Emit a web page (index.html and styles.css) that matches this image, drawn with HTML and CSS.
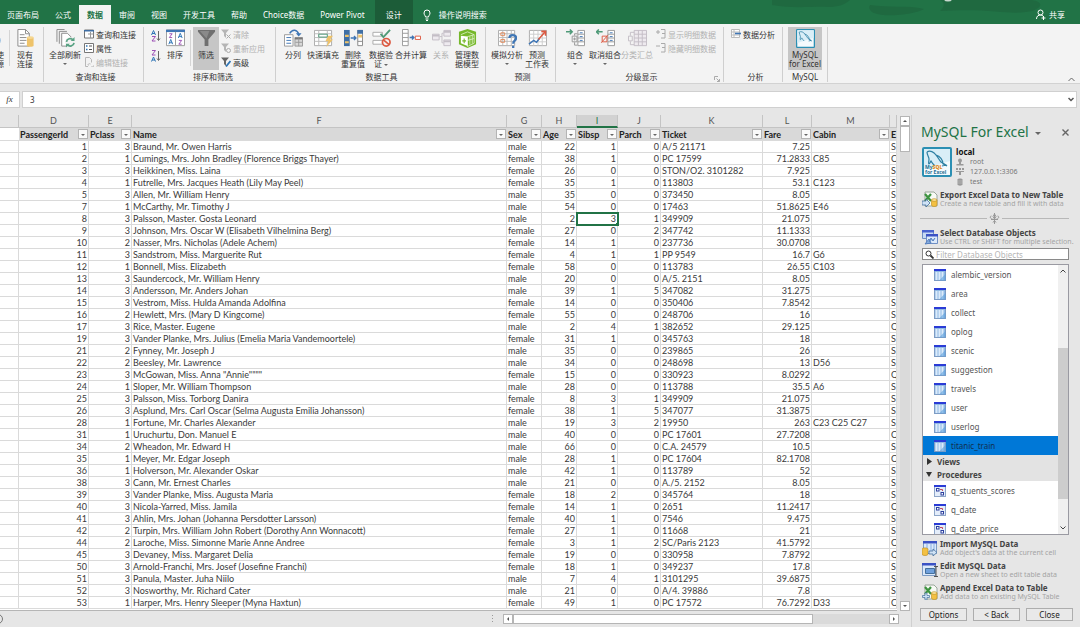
FILE: index.html
```html
<!DOCTYPE html>
<html lang="zh-CN">
<head>
  <meta charset="utf-8">
  <meta name="viewport" content="width=device-width, initial-scale=1.0">
  <title>MySQL For Excel</title>
  <link rel="stylesheet" href="styles.css">
</head>
<body>
  <!-- shared icons -->
  <svg class="symbols" aria-hidden="true">
    <symbol id="i-table" viewBox="0 0 12 12">
      <rect x="0.5" y="1" width="11" height="10.5" fill="#8fb9e4" stroke="#7d9cc4"/>
      <rect x="0" y="0" width="12" height="2" fill="#2a3bd6"/>
      <path d="M2.500 3v8M5.500 3v8M8.500 3v8" stroke="#dcebfa" stroke-width="2"/>
      <path d="M5 11.500 L11.500 5 V11.500 Z" fill="#5da0dc" opacity=".6"/>
    </symbol>
    <symbol id="i-proc" viewBox="0 0 12 12">
      <rect x="0.5" y="0.5" width="11" height="11" fill="#e4edfa" stroke="#8ea6c8"/>
      <rect x="0" y="0" width="12" height="2" fill="#2a3bd6"/>
      <rect x="2.500" y="3.500" width="2.500" height="2.500" fill="#fff" stroke="#2b3f9e"/>
      <rect x="7" y="7.500" width="2.500" height="2.500" fill="#fff" stroke="#2b3f9e"/>
      <path d="M6 4.500h2.500V6" fill="none" stroke="#c34b5e"/>
    </symbol>
    <symbol id="i-logo" viewBox="0 0 30 30">
      <rect x="1" y="1" width="28" height="28" rx="1" fill="#f4fafd" stroke="#2b8fb3" stroke-width="2"/>
      <path d="M2 2h26v12L2 22z" fill="#d9eef7"/>
      <path d="M5 5c3-2 7 0 9 3 2 2 3 5 5 7l5 3-4 1M5 5c0 3 2 5 2 7 0 3-1 4 0 5 1 0 1-2 2-3 1 2 3 4 4 5M14 8c4 1 7 5 7 9l4 2" fill="none" stroke="#2d7fa3" stroke-width="1.200"/>
    </symbol>
    <symbol id="i-excel" viewBox="0 0 16 16">
      <path d="M3 1h9l3 3v11H3z" fill="#f7faf5" stroke="#9aa69a"/>
      <path d="M3 3l6 7M9 3l-6 7" stroke="#3d9440" stroke-width="2.200"/>
      <path d="M9.500 9v5c0 2 5.500 2 5.500 0V9z" fill="#f3c043" stroke="#b98a1c" stroke-width=".6"/>
      <ellipse cx="12.200" cy="9" rx="2.800" ry="1.300" fill="#ffe59a" stroke="#b98a1c" stroke-width=".6"/>
    </symbol>
  </svg>

  <header class="tabs">
    <svg class="tabs-art" viewBox="0 0 320 24" aria-hidden="true">
      <path d="M12 0h78c-6 5-12 7-22 7-14-1-34 2-56-2zM110 5c18 3 38 0 54 4-8 5-38 9-50 4-4-2-6-5-4-8zM180 0h92c12 2 10 8 0 11-24 5-36-3-92 0 4-4 6-7 0-11z" fill="#1f6940"/>
      <ellipse cx="188" cy="-1" rx="4" ry="2.500" fill="#c9d8cf"/>
    </svg>
    <button class="tab">页面布局</button>
    <button class="tab">公式</button>
    <button class="tab active">数据</button>
    <button class="tab">审阅</button>
    <button class="tab">视图</button>
    <button class="tab">开发工具</button>
    <button class="tab">帮助</button>
    <button class="tab">Choice数据</button>
    <button class="tab">Power Pivot</button>
    <button class="tab design">设计</button>
    <button class="tab tell-me">
      <svg width="8" height="12" viewBox="0 0 8 12" fill="none" stroke="#fff"><path d="M2.500 8C2.500 6.500 1 6 1 4a3 3 0 0 1 6 0c0 2-1.500 2.500-1.500 4zM2.500 10h3M3 11.500h2"/></svg>
      操作说明搜索
    </button>
    <button class="tab share">
      <svg width="10" height="11" viewBox="0 0 10 11" fill="none" stroke="#fff"><circle cx="4.500" cy="3.500" r="2.500"/><path d="M.5 10c0-3 2-4 4-4 1 0 2 .5 2.500 1M7.500 7v4M5.500 9h4"/></svg>
      共享
    </button>
  </header>

  <div class="ribbon">
    <section class="group recent">
      <div class="tools">
        <button class="big">
          <svg class="ico" viewBox="0 0 20 20" fill="none" stroke="#5b9bd5"><circle cx="12" cy="12" r="6"/><path d="M12 8v4l3 2"/></svg>
          <span>最近使<br>用的源</span>
        </button>
        <i class="bar"></i>
        <button class="big narrow">
          <svg class="ico" viewBox="0 0 20 20"><path d="M2 .5h8l4 4V18H2z" fill="#fff" stroke="#8a8a8a"/><path d="M10 .5V5h4M4 6h5M4 9h7M4 12h7M4 15h5" fill="none" stroke="#8a8a8a"/><path d="M11.500 9v8.500c0 1.500 7 1.500 7 0V9z" fill="#eec36a"/><ellipse cx="15" cy="9" rx="3.500" ry="1.500" fill="#f6d791"/></svg>
          <span>现有<br>连接</span>
        </button>
      </div>
    </section>

    <section class="group connections">
      <div class="tools">
        <button class="big wide">
          <svg class="ico" viewBox="0 0 20 20"><path d="M1 .5h8M1 .5v13M3.500 2.500h8M3.500 2.500v13" fill="none" stroke="#8a8a8a"/><path d="M6 4.500h6l4 4V18H6z" fill="#fff" stroke="#8a8a8a"/><circle cx="15" cy="14" r="5.500" fill="#f3f3f3"/><path d="M11 13.500a4 4 0 0 1 7-2M19 14.500a4 4 0 0 1-7 2" fill="none" stroke="#58a283" stroke-width="1.800"/><path d="M19.500 8.500v4h-4zM10.500 19.500v-4h4z" fill="#58a283"/></svg>
          <span>全部刷新</span><i class="caret"></i>
        </button>
        <div class="stack">
          <button class="small"><svg class="sico" viewBox="0 0 10 10"><path d="M.5 1h9v8h-9z" fill="#fff" stroke="#777"/><path d="M0 1h10v1.500H0z" fill="#3f6fa5"/><path d="M4 5h5.500M6.500 3v6" stroke="#999"/></svg>查询和连接</button>
          <button class="small"><svg class="sico" viewBox="0 0 10 10"><path d="M.5.5h9v9h-9z" fill="#fff" stroke="#777"/><path d="M2 3h1.500M2 6.500h1.500" stroke="#2e75b6" stroke-width="1.500"/><path d="M5 3h3M5 6.500h3" stroke="#555"/></svg>属性</button>
          <button class="small" disabled><svg class="sico" viewBox="0 0 10 10" fill="none" stroke="#b8b8b8"><path d="M1.500 9.500v-9h4l2 2v3M1.500 9.500H4"/><path d="M4.500 8.500a1.500 1 0 0 1 2-1.500M9.500 8a1.500 1 0 0 1-2 1.500"/></svg>编辑链接</button>
        </div>
      </div>
      <h2>查询和连接</h2>
    </section>

    <section class="group sort">
      <div class="tools">
        <div class="stack az">
          <button class="small" aria-label="升序"><svg width="10" height="12" viewBox="0 0 10 12" fill="none"><path d="M.5 5 2.500.5 4.500 5M1 3.500h3" stroke="#2e75b6"/><path d="M1 6.500h3.500L1 11h3.500" stroke="#9b4fb5"/><path d="M7.500 1v9M6 8.500 7.500 10.500 9 8.500" stroke="#666"/></svg></button>
          <button class="small" aria-label="降序"><svg width="10" height="12" viewBox="0 0 10 12" fill="none"><path d="M1 .5h3.500L1 5h3.500" stroke="#9b4fb5"/><path d="M.5 11.500 2.500 7l2 4.500M1 10h3" stroke="#2e75b6"/><path d="M7.500 1v9M6 8.500 7.500 10.500 9 8.500" stroke="#666"/></svg></button>
        </div>
        <button class="big narrow">
          <svg class="ico" viewBox="0 0 20 20" fill="none"><path d="M.5 1h19v16.500H.5z" fill="#fff" stroke="#999"/><path d="M0 2h20" stroke="#3f76b5" stroke-width="2.500"/><path d="M10 3v14" stroke="#999"/><path d="M3.500 5h3L3.500 9h3M13.500 12h3l-3 4h3" stroke="#9b4fb5"/><path d="M3 16l2-5 2 5M3.500 14.500h3M13 9.500l2-5 2 5M13.500 8h3" stroke="#2e75b6"/></svg>
          <span>排序</span>
        </button>
        <i class="bar"></i>
        <button class="big narrow pressed">
          <svg class="ico" viewBox="0 0 20 20"><path d="M1 1h18v2l-7 8v7H8v-7L1 3z" fill="#6f6f6f"/><path d="M3 2h10l-3 8z" fill="#8a8a8a"/></svg>
          <span>筛选</span>
        </button>
        <div class="stack">
          <button class="small" disabled><svg class="sico" viewBox="0 0 10 10"><path d="M0 .5h8L5 4v5L3 7V4z" fill="#b5b5b5"/><path d="M5.500 5.500l4 4M9.500 5.500l-4 4" stroke="#aaa"/></svg>清除</button>
          <button class="small" disabled><svg class="sico" viewBox="0 0 10 10"><path d="M0 .5h8L5 4v5L3 7V4z" fill="#b5b5b5"/><circle cx="7.500" cy="7.500" r="2" fill="#f3f3f3" stroke="#aaa"/></svg>重新应用</button>
          <button class="small"><svg class="sico" viewBox="0 0 10 10"><path d="M0 .5h8L5 4v5L3 7V4z" fill="#666"/><path d="M5 9.500 9.500 4" stroke="#2e75b6" stroke-width="1.800"/></svg>高级</button>
        </div>
      </div>
      <h2>排序和筛选</h2>
    </section>

    <section class="group data-tools">
      <div class="tools">
        <button class="big">
          <svg class="ico" viewBox="0 0 20 20" fill="none"><path d="M.5 6h9v12h-9z" fill="#fff" stroke="#999"/><path d="M2.500 9h5M2.500 12h5M2.500 15h5" stroke="#3f76b5"/><path d="M11.500 9h8v9h-8z" fill="#d8d8d8" stroke="#999"/><path d="M11.500 10h8" stroke="#777" stroke-width="2"/><path d="M15.500 10v8M12 14h7" stroke="#999"/><path d="M6 4.500c3-5 8-4 9.500 1" stroke="#3f76b5" stroke-width="1.600"/><path d="M12.500 4.500h6l-3 3.500z" fill="#3f76b5"/></svg>
          <span>分列</span>
        </button>
        <button class="big">
          <svg class="ico" viewBox="0 0 20 20" fill="none"><path d="M.5 1.500h18v16H.5z" fill="#fff" stroke="#aaa"/><path d="M.5 5h18M.5 9h18M.5 13h18M5 1.500v16M14 1.500v16" stroke="#bbb"/><path d="M5 5.500h9v3H5z" fill="#fff" stroke="#4f9a78"/><path d="M15 7h5l-3 4h3l-7 8 2-6h-3z" fill="#eec36a"/></svg>
          <span>快速填充</span>
        </button>
        <button class="big">
          <svg class="ico" viewBox="0 0 20 20" fill="none"><path d="M0 1h6v17H0z" fill="#3f6fa5"/><path d="M1 6h4v2.500H1zM1 13h4v2H1z" fill="#eec36a"/><path d="M14.500 1.500h5v16h-5z" fill="#fff" stroke="#888"/><path d="M14 1h6v4h-6z" fill="#3f6fa5"/><path d="M15 6h4v3h-4z" fill="#eec36a"/><path d="M14.500 13h5" stroke="#888"/><path d="M7 9.500h5M10.500 7.500l2 2-2 2" stroke="#3f76b5" stroke-width="1.500"/></svg>
          <span>删除<br>重复值</span>
        </button>
        <button class="big narrow">
          <svg class="ico" viewBox="0 0 20 20" fill="none"><path d="M1 3.500h10v4H1zM1 12h10v4H1z" fill="#fff" stroke="#aaa"/><path d="M9 5l3 3.500L19 1" stroke="#4f9a78" stroke-width="2"/><circle cx="15" cy="14" r="4" fill="#f3f3f3" stroke="#dc5a42" stroke-width="1.800"/><path d="M12 11.500l6 5" stroke="#dc5a42" stroke-width="1.800"/></svg>
          <span>数据验<br>证 <i class="caret"></i></span>
        </button>
        <button class="big wide">
          <svg class="ico" viewBox="0 0 20 20" fill="none"><path d="M.5.5h6v17h-6zM.5 4.500h6M.5 9h6M.5 13h6" fill="#fff" stroke="#999"/><path d="M8 9h4M10.500 7l2 2-2 2" stroke="#3f76b5" stroke-width="1.500"/><path d="M14 7.500h5.500v3.500H14z" fill="#fff" stroke="#dc5a42"/></svg>
          <span>合并计算</span>
        </button>
        <button class="big narrow" disabled>
          <svg class="ico" viewBox="0 0 20 20" fill="none" stroke="#c4bec6"><path d="M.5 5.500h7v6h-7zM12.500 1.500h7v6h-7zM12.500 11.500h7v6h-7z" fill="#eeeaef"/><path d="M.5 7h7M12.500 3h7M12.500 13h7" stroke-width="2"/><path d="M8 8h2.500M12 4.500h-1.500v10H12"/></svg>
          <span>关系</span>
        </button>
        <button class="big narrow">
          <svg class="ico" viewBox="0 0 20 20" fill="none"><path d="M10 0l9 3v13l-9 4-9-4V3z" fill="#76b82a"/><path d="M3 6l7-3 7 3v9l-7 3.500V8M10 8l7-2M12.500 7.500v9M15 6.500v9M10 12l7-2" stroke="#e6f4d6" stroke-width=".8"/><path d="M3 7l7 1v10l-7-3z" fill="#fff"/><path d="M6.500 10v5M4.500 12.500h4" stroke="#76b82a" stroke-width="1.200"/></svg>
          <span>管理数<br>据模型</span>
        </button>
      </div>
      <h2>数据工具</h2>
    </section>

    <section class="group forecast">
      <div class="tools">
        <button class="big wide">
          <svg class="ico" viewBox="0 0 20 20" fill="none"><path d="M.5 1.500h17v16H.5z" fill="#fff" stroke="#aaa"/><path d="M.5 5h17M.5 9h17M.5 13h17M5 1.500v16M9.500 1.500v16M14 1.500v16" stroke="#bbb"/><path d="M3 4h4v3H3zM3 11h4v3H3z" stroke="#e08b5c"/><path d="M12 9.500c0-4 7-4 7 0 0 3-3 2.500-3 6M16 17.500V20" stroke="#3f76b5" stroke-width="2.400"/></svg>
          <span>模拟分析</span><i class="caret"></i>
        </button>
        <button class="big narrow">
          <svg class="ico" viewBox="0 0 20 20" fill="none"><path d="M1.500 1.500h18v16h-18z" fill="#fff" stroke="#aaa"/><path d="M1.500 5.500h18M1.500 9.500h18M1.500 13.500h18M6 1.500v16M10.500 1.500v16M15 1.500v16" stroke="#ccc"/><path d="M1 16l5-4 3 2 3-4" stroke="#3f76b5" stroke-width="1.600"/><path d="M11 11l7-8M14 2.500h4.500V7" stroke="#dc5a42" stroke-width="1.600"/></svg>
          <span>预测<br>工作表</span>
        </button>
      </div>
      <h2>预测</h2>
    </section>

    <section class="group outline">
      <div class="tools">
        <button class="big">
          <svg class="ico" viewBox="0 0 20 20" fill="none"><path d="M12.500 1.500h7v16h-7zM12.500 5.500h7M12.500 9.500h7M12.500 13.500h7" fill="#fff" stroke="#999"/><path d="M14.500 4h3M14.500 8h3M14.500 12h3" stroke="#3f76b5"/><path d="M6.500 7.500h5v6h-5zM7.500 10.500h3M9 9v3M9 7V5h3M9 14v3h3" stroke="#999"/><path d="M0 3h6M4 .5 6.500 3 4 5.500" stroke="#4f9a78" stroke-width="1.600"/></svg>
          <span>组合</span><i class="caret"></i>
        </button>
        <button class="big">
          <svg class="ico" viewBox="0 0 20 20" fill="none"><path d="M12.500 1.500h7v16h-7zM12.500 5.500h7M12.500 9.500h7M12.500 13.500h7" fill="#fff" stroke="#999"/><path d="M14.500 4h3M14.500 8h3M14.500 12h3" stroke="#3f76b5"/><path d="M6.500 7.500h5v6h-5zM5.500 14.500l7-8" stroke="#dc5a42"/><path d="M7 3H1M3 .5.500 3 3 5.500" stroke="#4f9a78" stroke-width="1.600"/></svg>
          <span>取消组合</span><i class="caret"></i>
        </button>
        <button class="big wide" disabled>
          <svg class="ico" viewBox="0 0 20 20" fill="none" stroke="#c4bec6"><path d="M6.500 1.500h13v16h-13zM6.500 5.500h13M6.500 9.500h13M6.500 13.500h13M11 1.500v16M15 1.500v16" fill="#eeeaef"/><path d="M.5 7.500h4v5h-4zM2.500 7V3.500h4M2.500 13v3.500h4"/></svg>
          <span>分类汇总</span>
        </button>
        <div class="stack details">
          <button class="small" disabled><svg class="sico" viewBox="0 0 10 10" fill="none" stroke="#aaa"><path d="M0 3h4M2 1v4M5 .5h4v8.500H5M6 4.500h3"/></svg>显示明细数据</button>
          <button class="small" disabled><svg class="sico" viewBox="0 0 10 10" fill="none" stroke="#aaa"><path d="M0 3h4M5 .5h4v8.500H5M6 4.500h3"/></svg>隐藏明细数据</button>
        </div>
      </div>
      <h2>分级显示</h2>
      <button class="launcher" aria-label="分级显示设置"><svg width="6" height="6" viewBox="0 0 6 6" fill="none" stroke="#aaa"><path d="M.5 4V.5H4M2.500 2.500l3 3M5.500 3v2.500H3"/></svg></button>
    </section>

    <section class="group analysis">
      <div class="tools">
        <div class="stack">
          <button class="small"><svg class="sico" viewBox="0 0 10 10" fill="none"><path d="M.5.5h8v8h-8zM.5 3h8M.5 6h8M3 .5v8" fill="#fff" stroke="#bbb"/><path d="M4 4.500h6" stroke="#3f76b5" stroke-width="1.600"/></svg>数据分析</button>
        </div>
      </div>
      <h2>分析</h2>
    </section>

    <section class="group mysql">
      <div class="tools">
        <button class="big wide pressed">
          <svg class="ico" viewBox="0 0 30 30"><use href="#i-logo"/></svg>
          <span>MySQL<br>for Excel</span>
        </button>
      </div>
      <h2>MySQL</h2>
    </section>
    <button class="collapse" aria-label="折叠功能区"><svg width="7" height="5" viewBox="0 0 7 5" fill="none" stroke="#666"><path d="M.5 4l3-3 3 3"/></svg></button>
  </div>

  <div class="formula">
    <label class="fx" for="formula-input">fx</label>
    <div class="formula-box">
      <input id="formula-input" type="text" value="3">
      <svg width="6" height="5" viewBox="0 0 6 5" fill="none" stroke="#555" stroke-width="1.500"><path d="M.5 1 3 3.500 5.500 1"/></svg>
    </div>
  </div>

  <div class="workspace">
    <main class="sheet">
      <div class="sheet-top">
        <div class="cells">
          <table>
            <colgroup>
              <col class="c-left"><col class="c-id"><col class="c-class"><col class="c-name"><col class="c-sex"><col class="c-age"><col class="c-sib"><col class="c-parch"><col class="c-ticket"><col class="c-fare"><col class="c-cabin"><col class="c-emb">
            </colgroup>
            <thead></thead>
            <tbody></tbody>
          </table>
        </div>
        <div class="vscroll">
          <i class="arrow up"></i>
          <i class="vthumb"></i>
          <i class="arrow down"></i>
        </div>
      </div>
      <div class="sheet-bottom">
        <svg class="add" width="3" height="10" viewBox="7 0 3 10" fill="none" stroke="#777"><circle cx="5" cy="5" r="4.500"/></svg>
        <svg width="2" height="8" viewBox="0 0 2 8" fill="#999"><path d="M0 0h1v1H0zM0 3h1v1H0zM0 6h1v1H0z"/></svg>
        <div class="hscroll">
          <i class="arrow left"></i>
          <i class="hthumb"></i>
          <i class="arrow right"></i>
        </div>
      </div>
    </main>

    <aside class="pane">
      <div class="pane-title">
        <h1>MySQL For Excel</h1>
        <button aria-label="选项"><i class="caret"></i></button>
        <button class="close" aria-label="关闭"><svg width="7" height="7" viewBox="0 0 7 7" stroke="#666" stroke-width="1.400"><path d="M.5.5l6 6M6.500.5l-6 6"/></svg></button>
      </div>

      <div class="connection">
        <div class="logo">
          <svg width="30" height="30" viewBox="0 0 30 30"><use href="#i-logo"/></svg>
          <span><em>My</em><b>SQL</b><br>for Excel</span>
        </div>
        <dl>
          <dt>local</dt>
          <dd><svg width="8" height="8" viewBox="0 0 8 8" fill="#999"><circle cx="4" cy="2.500" r="2"/><path d="M3 4h2v2h2.500v1.500H.5V6H3z"/></svg>root</dd>
          <dd><svg width="8" height="8" viewBox="0 0 8 8" fill="#999"><path d="M0 0h2v2H0zM3 0h2v2H3zM6 0h2v2H6zM0 3h8v1H0zM3 4h2v3H3z"/></svg>127.0.0.1:3306</dd>
          <dd><svg width="8" height="8" viewBox="0 0 8 8" fill="#999"><path d="M1.500 1.500c0-1.500 5-1.500 5 0v5c0 1.500-5 1.500-5 0z"/><path d="M1.500 3h5M1.500 5h5" stroke="#ccc" stroke-width=".5"/></svg>test</dd>
        </dl>
      </div>

      <button class="action">
        <svg class="aico" viewBox="0 0 16 16"><use href="#i-excel"/><path d="M0 10h4V8l4 4-4 4v-2H0z" fill="#cfe2f5" stroke="#44709c" stroke-width=".8"/></svg>
        <span><strong>Export Excel Data to New Table</strong><small>Create a new table and fill it with data</small></span>
      </button>
      <div class="divider">
        <svg width="11" height="11" viewBox="0 0 11 11" fill="none" stroke="#999"><path d="M5.500 0v11M2 6.500h7M5.500 1L4 3.500 5.500 6 7 3.500zM3.500 6C1 6 .5 3 2.500 3M7.500 6C10 6 10.500 3 8.500 3M5.500 7.500 4 9.500M5.500 7.500 7 9.500"/></svg>
      </div>
      <div class="action">
        <svg class="aico" viewBox="0 0 16 16"><path d="M.5 1.500h11v8H.5z" fill="#c7daf3" stroke="#6f8fc4"/><path d="M0 1h12v2.500H0z" fill="#4a63cf"/><path d="M4.500 5.500h11v9h-11z" fill="#dce9fa" stroke="#6f8fc4"/><path d="M4 5h12v2.500H4z" fill="#3b52c4"/><path d="M7 13l2-4 2 3 2-3M3 15l4-5 2 4z" fill="#8ab0e2" stroke="#557fbd"/></svg>
        <span><strong>Select Database Objects</strong><small>Use CTRL or SHIFT for multiple selection.</small></span>
      </div>

      <div class="filter">
        <label for="filter-input"><svg width="9" height="9" viewBox="0 0 9 9" fill="none" stroke="#333"><circle cx="3.500" cy="3.500" r="2.500"/><path d="M5.500 5.500l3 3" stroke-width="1.800"/></svg></label>
        <input id="filter-input" type="text" placeholder="Filter Database Objects" aria-label="Filter Database Objects">
      </div>

      <div class="objects">
        <ul>
          <li><a href="#"><svg class="oico"><use href="#i-table"/></svg>alembic_version</a></li>
          <li><a href="#"><svg class="oico"><use href="#i-table"/></svg>area</a></li>
          <li><a href="#"><svg class="oico"><use href="#i-table"/></svg>collect</a></li>
          <li><a href="#"><svg class="oico"><use href="#i-table"/></svg>oplog</a></li>
          <li><a href="#"><svg class="oico"><use href="#i-table"/></svg>scenic</a></li>
          <li><a href="#"><svg class="oico"><use href="#i-table"/></svg>suggestion</a></li>
          <li><a href="#"><svg class="oico"><use href="#i-table"/></svg>travels</a></li>
          <li><a href="#"><svg class="oico"><use href="#i-table"/></svg>user</a></li>
          <li><a href="#"><svg class="oico"><use href="#i-table"/></svg>userlog</a></li>
          <li><a href="#" class="selected"><svg class="oico"><use href="#i-table"/></svg>titanic_train</a></li>
          <li class="node"><svg width="6" height="7" viewBox="0 0 6 7" fill="#333"><path d="M1 0l5 3.500L1 7z"/></svg>Views</li>
          <li class="node"><svg width="6" height="7" viewBox="0 0 6 7" fill="#333"><path d="M0 1h6L3 6z"/></svg>Procedures</li>
          <li><a href="#"><svg class="oico"><use href="#i-proc"/></svg>q_stuents_scores</a></li>
          <li><a href="#"><svg class="oico"><use href="#i-proc"/></svg>q_date</a></li>
          <li><a href="#"><svg class="oico"><use href="#i-proc"/></svg>q_date_price</a></li>
        </ul>
        <div class="oscroll">
          <svg width="6" height="4" viewBox="0 0 6 4" fill="none" stroke="#444"><path d="M.5 3.500 3 1l2.500 2.500"/></svg>
          <i></i>
          <svg width="6" height="4" viewBox="0 0 6 4" fill="none" stroke="#444"><path d="M.5.5 3 3 5.500.5"/></svg>
        </div>
      </div>

      <div class="actions">
        <button class="action">
          <svg class="aico" viewBox="0 0 16 16"><path d="M1.500 1.500h13v12h-13z" fill="#dce9fa" stroke="#7d9cc4"/><path d="M1 1h14v2.500H1z" fill="#3b52c4"/><path d="M5 4v9M9 4v9M12 4v6" stroke="#8ab0e2"/><path d="M0 9v5c0 2 6 2 6 0V9c0-1.500-6-1.500-6 0z" fill="#f3c043" stroke="#b98a1c" stroke-width=".6"/><path d="M7 11h4V9l4 3.500-4 3.500v-2H7z" fill="#cfe2f5" stroke="#44709c" stroke-width=".8"/></svg>
          <span><strong>Import MySQL Data</strong><small>Add object's data at the current cell</small></span>
        </button>
        <button class="action">
          <svg class="aico" viewBox="0 0 16 16"><path d="M.5 1.500h13v12H.5z" fill="#dce9fa" stroke="#7d9cc4"/><path d="M0 1h14v2.500H0z" fill="#3b52c4"/><path d="M3.500 6.500h9v5h-9z" fill="#6fa0dc" stroke="#44709c"/><path d="M12 4.500h4M14 4.500v10M12 14.500h4" stroke="#555"/></svg>
          <span><strong>Edit MySQL Data</strong><small>Open a new sheet to edit table data</small></span>
        </button>
        <button class="action">
          <svg class="aico" viewBox="0 0 16 16"><use href="#i-excel"/><path d="M3 9h2v2.500h2.500v2H5V16H3v-2.500H.5v-2H3z" fill="#cfe2f5" stroke="#44709c" stroke-width=".7"/></svg>
          <span><strong>Append Excel Data to Table</strong><small>Add data to an existing MySQL Table</small></span>
        </button>
      </div>

      <div class="pane-buttons">
        <button>Options</button>
        <button>&lt; Back</button>
        <button>Close</button>
      </div>
    </aside>
  </div>

  <script src="app.js"></script>
</body>
</html>
```

FILE: styles.css
```css
* {
  box-sizing: border-box;
}

body {
  margin: 0;
  height: 100vh;
  display: flex;
  flex-direction: column;
  overflow: hidden;
  background-color: #e6e6e6;
  color: #333;
  font-family: 'Noto Sans', 'Noto Sans CJK SC', sans-serif;
  font-size: 8px;
}

button, input {
  font: inherit;
  color: inherit;
  border: none;
  background: none;
  padding: 0;
  margin: 0;
}

h1, h2, dl, dd, ul {
  margin: 0;
  padding: 0;
  font-weight: normal;
}

svg {
  display: block;
  flex: none;
}

.symbols {
  position: absolute;
  width: 0;
  height: 0;
}

.caret {
  display: inline-block;
  border: 2px solid transparent;
  border-top-color: #666;
  border-bottom: none;
}

/* Tabs */
.tabs {
  position: relative;
  display: flex;
  align-items: flex-end;
  height: 24px;
  background-color: #217346;
  color: #fff;
}

.tabs-art {
  position: absolute;
  top: 0;
  right: 0;
  width: 320px;
  height: 24px;
}

.tab {
  display: flex;
  align-items: center;
  height: 19px;
  padding: 0 8px;
  white-space: nowrap;
}

.tab:first-of-type {
  padding-left: 7px;
}

.tab.active {
  background-color: #f3f3f3;
  color: #217346;
  font-weight: bold;
}

.tab.design {
  height: 24px;
  padding: 5px 11px 0;
  margin-left: 2px;
  background-color: #1c5c38;
}

.tab.tell-me {
  gap: 8px;
  padding-left: 10px;
}

.tab.share {
  position: relative;
  gap: 3px;
  margin-left: auto;
  padding-right: 15px;
}

/* Ribbon */
.ribbon {
  position: relative;
  display: flex;
  height: 60px;
  padding: 3px 0 1px;
  background-color: #f3f3f3;
  border-bottom: 1px solid #d2d2d2;
}

.group {
  position: relative;
  display: flex;
  flex-direction: column;
  justify-content: space-between;
  border-right: 1px solid #cfcfcf;
}

.group h2 {
  font-size: 8px;
  line-height: 10px;
  text-align: center;
}

.tools {
  display: flex;
  height: 43px;
}

.recent { width: 44px; overflow: hidden; }
.connections { width: 100px; padding-left: 4px; }
.sort { width: 132px; padding-left: 7px; }
.data-tools { width: 210px; padding-left: 2px; }
.forecast { width: 70px; padding-left: 4px; }
.outline { width: 168px; padding-left: 4px; }
.analysis { width: 59px; padding-left: 5px; }
.mysql { width: 45px; padding-left: 5px; }

.mysql h2 {
  padding-right: 5px;
}

.recent .tools {
  justify-content: flex-end;
  padding-right: 5px;
}

.big {
  display: flex;
  flex-direction: column;
  align-items: center;
  flex: none;
  width: 30px;
  padding-top: 2px;
  line-height: 9px;
  white-space: nowrap;
}

.big.narrow { width: 26px; }
.big.wide { width: 34px; }

.big span {
  margin-top: 2px;
}

.big > .caret {
  margin-top: 4px;
}

.big span .caret {
  vertical-align: middle;
}

.pressed {
  background-color: #c6c6c6;
}

.ico {
  width: 19px;
  height: 19px;
}

.bar {
  flex: none;
  width: 1px;
  height: 36px;
  margin: 3px 2px 0;
  background-color: #d4d4d4;
}

.stack {
  display: flex;
  flex-direction: column;
  margin-left: 2px;
}

.small {
  display: flex;
  align-items: center;
  gap: 2px;
  height: 14px;
  white-space: nowrap;
}

.stack.az {
  margin: 2px 1px 0 0;
  gap: 6px;
}

.sico {
  width: 10px;
  height: 10px;
}

button:disabled {
  color: #b1b1b1;
}

.launcher {
  position: absolute;
  right: 3px;
  bottom: 0;
}

.collapse {
  position: absolute;
  right: 5px;
  bottom: 1px;
}

/* Formula bar */
.formula {
  display: flex;
  gap: 2px;
  padding: 7px 3px 7px 0;
}

.fx {
  width: 20px;
  height: 17px;
  border: 1px solid #d0d0d0;
  border-left: none;
  background-color: #fff;
  font-family: 'Liberation Serif', serif;
  font-size: 9px;
  font-style: italic;
  line-height: 15px;
  text-align: center;
}

.formula-box {
  display: flex;
  flex: 1;
  align-items: center;
  height: 17px;
  padding: 0 2px 0 7px;
  border: 1px solid #d0d0d0;
  background-color: #fff;
}

.formula-box input {
  flex: 1;
}

/* Sheet */
.workspace {
  display: flex;
  flex: 1;
  min-height: 0;
}

.sheet {
  display: flex;
  flex: 1;
  flex-direction: column;
  min-width: 0;
}

.sheet-top {
  display: flex;
  flex: 1;
  min-height: 0;
}

.cells {
  flex: 1;
  overflow: hidden;
  border-bottom: 1px solid #b5b5b5;
  background-color: #fff;
}

table {
  width: 100%;
  table-layout: fixed;
  border-collapse: separate;
  border-spacing: 0;
  color: #3a3a3a;
  font-family: Lato, sans-serif;
  font-size: 9px;
}

.c-left { width: 19px; }
.c-id { width: 70px; }
.c-class { width: 43px; }
.c-sex { width: 35px; }
.c-age { width: 35px; }
.c-sib { width: 41px; }
.c-parch { width: 43px; }
.c-ticket { width: 102px; }
.c-fare { width: 49px; }
.c-cabin { width: 78px; }
.c-emb { width: 7px; }

th, td {
  height: 12px;
  padding: 0 1px;
  border-right: 1px solid #dadada;
  border-bottom: 1px solid #dadada;
  line-height: 11px;
  text-align: left;
  white-space: nowrap;
  overflow: hidden;
}

.letters th {
  height: 13px;
  background-color: #e6e6e6;
  border-color: #c4c4c4;
  color: #555;
  font-weight: normal;
  line-height: 12px;
  text-align: center;
}

.letters th.current {
  background-color: #d2d2d2;
  border-bottom: 2px solid #217346;
  color: #217346;
  line-height: 11px;
}

.fields th {
  height: 13px;
  padding-right: 0;
  background-color: #d9d9d9;
  border-right: none;
  color: #222;
}

.fields th:first-child {
  background-color: #fff;
}

.field {
  display: flex;
  justify-content: space-between;
  align-items: center;
  height: 12px;
}

.field button {
  flex: none;
  width: 10px;
  height: 10px;
  margin-right: 1px;
  border: 1px solid #b4b4b4;
  background-color: #fafafa;
  line-height: 0;
}

td.num {
  text-align: right;
}

td.current {
  position: relative;
  overflow: visible;
  outline: 2px solid #217346;
  outline-offset: -1px;
}

td.current::after {
  content: '';
  position: absolute;
  right: -2px;
  bottom: -2px;
  width: 3px;
  height: 3px;
  background-color: #217346;
}

.arrow {
  flex: none;
  display: flex;
  align-items: center;
  justify-content: center;
  width: 10px;
  height: 10px;
  border: 1px solid #b5b5b5;
  background-color: #fff;
}

.arrow::before {
  content: '';
  border: 2px solid transparent;
}

.up::before { border-bottom-color: #555; border-top: none; }
.down::before { border-top-color: #555; border-bottom: none; }
.left::before { border-right-color: #555; border-left: none; }
.right::before { border-left-color: #555; border-right: none; }

.vscroll {
  display: flex;
  flex-direction: column;
  width: 14px;
  padding: 1px 1px 0 3px;
}

.vthumb {
  height: 26px;
  border: 1px solid #b5b5b5;
  background-color: #fff;
}

.vscroll .down {
  margin-top: auto;
}

.vscroll, .hscroll {
  background: #dadada content-box;
}

.sheet-bottom {
  display: flex;
  align-items: center;
  height: 16px;
  padding-right: 12px;
}

.sheet-bottom .add {
  margin-right: auto;
}

.hscroll {
  display: flex;
  width: 396px;
  margin-left: 9px;
}

.hthumb {
  width: 300px;
  border: 1px solid #b5b5b5;
  background-color: #fff;
}

.hscroll .right {
  margin-left: auto;
}

/* Task pane */
.pane {
  display: flex;
  flex-direction: column;
  width: 169px;
  padding: 8px 7px 6px 8px;
  border-left: 1px solid #d0d0d0;
  color: #444;
}

.pane-title {
  display: flex;
  align-items: center;
  height: 18px;
  padding-left: 1px;
}

.pane-title h1 {
  margin-right: 6px;
  color: #217346;
  font-size: 14px;
  line-height: 18px;
  white-space: nowrap;
}

.pane-title button {
  height: 11px;
}

.pane-title .caret {
  border-width: 3px 3px 0;
  vertical-align: middle;
}

.pane-title .close {
  margin-left: auto;
  margin-right: 4px;
}

.connection {
  display: flex;
  gap: 4px;
  padding: 6px 0 0 2px;
  height: 47px;
}

.logo {
  position: relative;
  width: 30px;
}

.logo span {
  position: absolute;
  left: 3px;
  bottom: 13px;
  color: #1f6f94;
  font-size: 5px;
  font-weight: bold;
  line-height: 5px;
  white-space: nowrap;
}

.logo em { font-style: normal; }
.logo b { color: #e08a1e; }

.connection dt {
  color: #111;
  font-weight: bold;
  line-height: 10px;
}

.connection dd {
  display: flex;
  align-items: center;
  gap: 6px;
  color: #777;
  font-size: 7px;
  line-height: 10px;
}

.action {
  display: flex;
  align-items: center;
  gap: 2px;
  height: 22px;
  padding-left: 2px;
  text-align: left;
  white-space: nowrap;
}

.aico {
  width: 16px;
  height: 16px;
}

.action strong, .action small {
  display: block;
  line-height: 9px;
}

.action small {
  color: #a4a4a4;
  font-size: 7px;
}

.divider {
  display: flex;
  align-items: center;
  gap: 2px;
  height: 16px;
  margin-right: 4px;
}

.divider::before, .divider::after {
  content: '';
  flex: 1;
  height: 1px;
  background-color: #b8b8b8;
}

.filter {
  display: flex;
  align-items: center;
  gap: 2px;
  height: 12px;
  margin: 0 4px 4px 2px;
  padding: 0 2px;
  border: 1px solid #8a8a8a;
  background-color: #fff;
}

.filter input {
  flex: 1;
  min-width: 0;
}

.filter input::placeholder {
  color: #b5b5b5;
}

.objects {
  display: flex;
  flex: 1;
  min-height: 0;
  margin: 0 4px 2px 2px;
  border: 1px solid #9a9aa2;
  background-color: #fff;
}

.objects ul {
  flex: 1;
  overflow: hidden;
  list-style: none;
}

.objects a {
  display: flex;
  align-items: center;
  gap: 5px;
  height: 19px;
  padding-left: 11px;
  color: #555;
  text-decoration: none;
}

.objects a.selected {
  background-color: #0078d7;
  color: #10304f;
}

.oico {
  width: 12px;
  height: 12px;
}

.node {
  display: flex;
  align-items: center;
  gap: 5px;
  height: 13px;
  padding-left: 3px;
  background-color: #e3e3e3;
  font-weight: bold;
}

.oscroll {
  display: flex;
  flex-direction: column;
  justify-content: space-between;
  align-items: center;
  width: 10px;
  padding: 4px 0;
  background-color: #f0f0f0;
}

.oscroll i {
  width: 10px;
  height: 151px;
  margin-top: 48px;
  background-color: #cdcdcd;
}

.pane-buttons {
  display: flex;
  gap: 6px;
  padding-top: 5px;
}

.pane-buttons button {
  flex: 1;
  height: 13px;
  border: 1px solid #adadad;
  background-color: #e9e9e9;
  color: #222;
  line-height: 11px;
}
```

FILE: app.js
```js
const letters = ['', 'D', 'E', 'F', 'G', 'H', 'I', 'J', 'K', 'L', 'M', ''];
const fields = ['', 'PassengerId', 'Pclass', 'Name', 'Sex', 'Age', 'Sibsp', 'Parch', 'Ticket', 'Fare', 'Cabin', 'E'];
const numeric = [1, 2, 5, 6, 7, 9];

// id | class | name | sex | age | sibsp | parch | ticket | fare | cabin | embarked
const passengers = `1|3|Braund, Mr. Owen Harris|male|22|1|0|A/5 21171|7.25||S
2|1|Cumings, Mrs. John Bradley (Florence Briggs Thayer)|female|38|1|0|PC 17599|71.2833|C85|C
3|3|Heikkinen, Miss. Laina|female|26|0|0|STON/O2. 3101282|7.925||S
4|1|Futrelle, Mrs. Jacques Heath (Lily May Peel)|female|35|1|0|113803|53.1|C123|S
5|3|Allen, Mr. William Henry|male|35|0|0|373450|8.05||S
7|1|McCarthy, Mr. Timothy J|male|54|0|0|17463|51.8625|E46|S
8|3|Palsson, Master. Gosta Leonard|male|2|3|1|349909|21.075||S
9|3|Johnson, Mrs. Oscar W (Elisabeth Vilhelmina Berg)|female|27|0|2|347742|11.1333||S
10|2|Nasser, Mrs. Nicholas (Adele Achem)|female|14|1|0|237736|30.0708||C
11|3|Sandstrom, Miss. Marguerite Rut|female|4|1|1|PP 9549|16.7|G6|S
12|1|Bonnell, Miss. Elizabeth|female|58|0|0|113783|26.55|C103|S
13|3|Saundercock, Mr. William Henry|male|20|0|0|A/5. 2151|8.05||S
14|3|Andersson, Mr. Anders Johan|male|39|1|5|347082|31.275||S
15|3|Vestrom, Miss. Hulda Amanda Adolfina|female|14|0|0|350406|7.8542||S
16|2|Hewlett, Mrs. (Mary D Kingcome)|female|55|0|0|248706|16||S
17|3|Rice, Master. Eugene|male|2|4|1|382652|29.125||Q
19|3|Vander Planke, Mrs. Julius (Emelia Maria Vandemoortele)|female|31|1|0|345763|18||S
21|2|Fynney, Mr. Joseph J|male|35|0|0|239865|26||S
22|2|Beesley, Mr. Lawrence|male|34|0|0|248698|13|D56|S
23|3|McGowan, Miss. Anna "Annie""""|female|15|0|0|330923|8.0292||Q
24|1|Sloper, Mr. William Thompson|male|28|0|0|113788|35.5|A6|S
25|3|Palsson, Miss. Torborg Danira|female|8|3|1|349909|21.075||S
26|3|Asplund, Mrs. Carl Oscar (Selma Augusta Emilia Johansson)|female|38|1|5|347077|31.3875||S
28|1|Fortune, Mr. Charles Alexander|male|19|3|2|19950|263|C23 C25 C27|S
31|1|Uruchurtu, Don. Manuel E|male|40|0|0|PC 17601|27.7208||C
34|2|Wheadon, Mr. Edward H|male|66|0|0|C.A. 24579|10.5||S
35|1|Meyer, Mr. Edgar Joseph|male|28|1|0|PC 17604|82.1708||C
36|1|Holverson, Mr. Alexander Oskar|male|42|1|0|113789|52||S
38|3|Cann, Mr. Ernest Charles|male|21|0|0|A./5. 2152|8.05||S
39|3|Vander Planke, Miss. Augusta Maria|female|18|2|0|345764|18||S
40|3|Nicola-Yarred, Miss. Jamila|female|14|1|0|2651|11.2417||C
41|3|Ahlin, Mrs. Johan (Johanna Persdotter Larsson)|female|40|1|0|7546|9.475||S
42|2|Turpin, Mrs. William John Robert (Dorothy Ann Wonnacott)|female|27|1|0|11668|21||S
44|2|Laroche, Miss. Simonne Marie Anne Andree|female|3|1|2|SC/Paris 2123|41.5792||C
45|3|Devaney, Miss. Margaret Delia|female|19|0|0|330958|7.8792||Q
50|3|Arnold-Franchi, Mrs. Josef (Josefine Franchi)|female|18|1|0|349237|17.8||S
51|3|Panula, Master. Juha Niilo|male|7|4|1|3101295|39.6875||S
52|3|Nosworthy, Mr. Richard Cater|male|21|0|0|A/4. 39886|7.8||S
53|1|Harper, Mrs. Henry Sleeper (Myna Haxtun)|female|49|1|0|PC 17572|76.7292|D33|C`;

function addRow(parent, className) {
  const row = document.createElement('tr');
  if (className) row.className = className;
  parent.appendChild(row);
  return row;
}

function addCell(row, tag, text, className) {
  const cell = document.createElement(tag);
  if (className) cell.className = className;
  cell.textContent = text;
  row.appendChild(cell);
  return cell;
}

const thead = document.querySelector('thead');
const tbody = document.querySelector('tbody');

const letterRow = addRow(thead, 'letters');
letters.forEach(letter => addCell(letterRow, 'th', letter, letter === 'I' ? 'current' : ''));

const fieldRow = addRow(thead, 'fields');
fields.forEach((field, i) => {
  const cell = addCell(fieldRow, 'th', '');
  const box = document.createElement('div');
  box.className = 'field';
  box.textContent = field;
  if (i > 0 && i < fields.length - 1) {
    const button = document.createElement('button');
    button.setAttribute('aria-label', '筛选 ' + field);
    button.innerHTML = '<i class="caret"></i>';
    box.appendChild(button);
  }
  cell.appendChild(box);
});

passengers.split('\n').forEach(line => {
  const row = addRow(tbody);
  const values = ['', ...line.split('|')];
  values.forEach((value, i) => {
    const classes = [];
    if (numeric.includes(i)) classes.push('num');
    if (values[1] === '8' && i === 6) classes.push('current');
    addCell(row, 'td', value, classes.join(' '));
  });
});
```
